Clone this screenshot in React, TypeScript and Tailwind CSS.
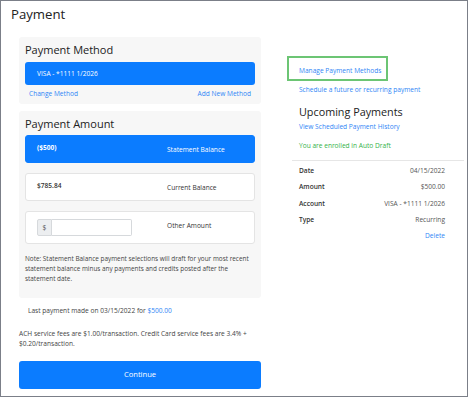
const font = { fontFamily: '"Open Sans", "Noto Sans", sans-serif' };

function AmountBox({
  active,
  left,
  label,
  tall,
}: {
  active?: boolean;
  left: React.ReactNode;
  label: string;
  tall?: boolean;
}) {
  return (
    <div
      className={
        active
          ? "flex h-[28px] rounded-[3px] border border-[#0b7cff] bg-[#0b7cff] text-white"
          : tall
          ? "flex h-[33px] rounded-[3px] border border-[#e4e4e4] bg-white text-[#333]"
          : "flex h-[28px] rounded-[3px] border border-[#e4e4e4] bg-white text-[#333]"
      }
    >
      <div className="w-[141px] shrink-0 pl-[11px] pt-[7px] text-[6.6px] leading-[9px]">{left}</div>
      <div className="pt-[9px] text-[6.6px] leading-[9px]">{label}</div>
    </div>
  );
}

export default function App() {
  return (
    <div
      style={font}
      className="h-[397px] w-[468px] overflow-hidden border border-[#7b7f88] bg-white text-[#333]"
    >
      <h1 className="pl-[10px] pt-[4px] text-[13.2px] font-medium leading-[18px] text-[#222]">Payment</h1>

      <div className="mt-[14px] flex gap-[26px] pl-[18px]">
        {/* left column */}
        <div className="w-[242px] shrink-0">
          <div className="rounded-[3px] bg-[#f7f7f7] px-[6px] pb-[5px] pt-[6px]">
            <h2 className="text-[11px] font-medium leading-[14px] text-[#222]">Payment Method</h2>
            <div className="mt-[5px] flex h-[23px] items-center rounded-[3px] bg-[#0b7cff] pl-[12px] text-[6.6px] text-white">
              VISA - *1111 1/2026
            </div>
            <div className="mt-[4px] flex justify-between px-[4px] text-[6.6px] leading-[10px] text-[#2f86f6]">
              <span>Change Method</span>
              <span>Add New Method</span>
            </div>
          </div>

          <div className="mt-[7px] rounded-[3px] bg-[#f7f7f7] px-[6px] pb-[14px] pt-[6px]">
            <h2 className="text-[11px] font-medium leading-[14px] text-[#222]">Payment Amount</h2>
            <div className="mt-[4px] flex flex-col gap-[10px]">
              <AmountBox active left={<div className="font-bold">($500)</div>} label="Statement Balance" />
              <AmountBox left={<div className="font-semibold">$785.84</div>} label="Current Balance" />
              <AmountBox
                tall
                left={
                  <div className="flex h-[17px] w-[95px]">
                    <span className="flex w-[15px] items-center justify-center rounded-l-[2px] border border-[#d6d9dc] bg-[#eceef0] text-[#555]">
                      $
                    </span>
                    <input
                      className="w-[80px] rounded-r-[2px] border border-l-0 border-[#d6d9dc] bg-white outline-none"
                      aria-label="Other amount"
                    />
                  </div>
                }
                label="Other Amount"
              />
            </div>
            <p className="mt-[10px] text-[6.4px] leading-[10px] text-[#444]">
              Note: Statement Balance payment selections will draft for your most recent statement balance
              minus any payments and credits posted after the statement date.
            </p>
          </div>

          <p className="mt-[8px] pl-[9px] text-[6.6px] leading-[10px] text-[#444]">
            Last payment made on 03/15/2022 for <span className="text-[#2f86f6]">$500.00</span>
          </p>
          <p className="mt-[13px] text-[6.6px] leading-[10px] text-[#444]">
            ACH service fees are $1.00/transaction. Credit Card service fees are 3.4% + $0.20/transaction.
          </p>
          <button className="mt-[12px] flex h-[28px] w-full items-center justify-center rounded-[3px] bg-[#0b7cff] text-[7.6px] text-white">
            Continue
          </button>
        </div>

        {/* right column */}
        <div className="flex-1 pr-[2px] pt-[18.7px]">
          <div className="h-[25px] w-[101px] border-2 border-[#6cc574] pl-[10px] pt-[8px] text-[6.6px] leading-[10px] text-[#2f86f6]">
            Manage Payment Methods
          </div>
          <div className="pl-[12px]">
            <p className="mt-[4.3px] text-[6.6px] leading-[10px] text-[#2f86f6]">
              Schedule a future or recurring payment
            </p>
            <h2 className="mt-[9.7px] text-[10.8px] font-medium leading-[14px] text-[#222]">Upcoming Payments</h2>
            <p className="mt-[3.6px] text-[6.6px] leading-[10px] text-[#2f86f6]">View Scheduled Payment History</p>
            <p className="mt-[9px] text-[6.6px] leading-[10px] text-[#33b249]">You are enrolled in Auto Draft</p>
          </div>
          <div className="ml-[5px] mr-[1px] mt-[8.7px] border-t border-[#e6e6e6]" />
          <div className="mt-[5px] flex w-[158px] flex-col gap-[6.3px] pl-[12px] text-[6.6px] leading-[10px]">
            {[
              ["Date", "04/15/2022"],
              ["Amount", "$500.00"],
              ["Account", "VISA - *1111 1/2026"],
              ["Type", "Recurring"],
            ].map(([k, v]) => (
              <div key={k} className="flex justify-between">
                <span className="font-semibold text-[#333]">{k}</span>
                <span className="text-[#555]">{v}</span>
              </div>
            ))}
            <div className="text-right text-[#2f86f6]">Delete</div>
          </div>
        </div>
      </div>
    </div>
  );
}
